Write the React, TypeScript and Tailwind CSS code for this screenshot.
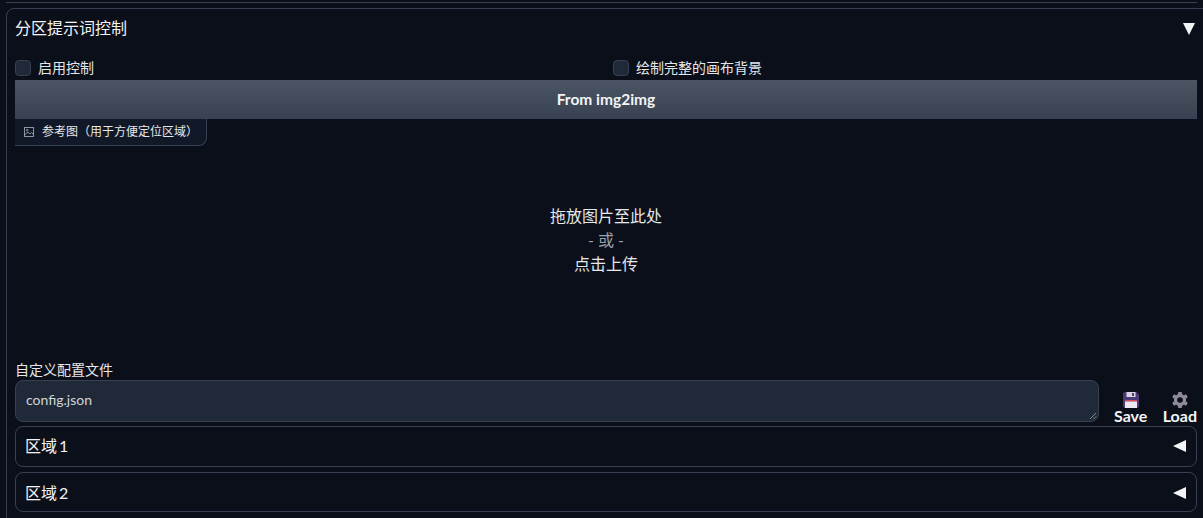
const FONT = 'font-["Lato","Noto_Sans_CJK_SC",sans-serif]'

function SaveIcon() {
  return (
    <svg width="16" height="16" viewBox="0 0 16 16">
      <path d="M0 2 A2 2 0 0 1 2 0 H13.5 L16 2.5 V14 A2 2 0 0 1 14 16 H2 A2 2 0 0 1 0 14 Z" fill="#4b3a78" />
      <rect x="3.5" y="0" width="9" height="5" fill="#d9d6e2" />
      <rect x="9" y="1" width="2" height="3" fill="#4b3a78" />
      <rect x="2" y="8" width="12" height="1.5" fill="#e0484f" />
      <rect x="2" y="9.5" width="12" height="6.5" fill="#ece9f0" />
    </svg>
  )
}

function GearIcon() {
  return (
    <svg width="16" height="16" viewBox="0 0 16 16">
      <path
        fill="#8f8898"
        fillRule="evenodd"
        d="M6.3 0 H9.7 L10.2 2.3 L11.9 3.2 L14 2.2 L15.8 5 L14 6.5 V9.5 L15.8 11 L14 13.8 L11.9 12.8 L10.2 13.7 L9.7 16 H6.3 L5.8 13.7 L4.1 12.8 L2 13.8 L0.2 11 L2 9.5 V6.5 L0.2 5 L2 2.2 L4.1 3.2 L5.8 2.3 Z M8 5.2 A2.8 2.8 0 1 0 8 10.8 A2.8 2.8 0 1 0 8 5.2 Z"
      />
    </svg>
  )
}

function ImageIcon() {
  return (
    <svg width="10" height="10" viewBox="0 0 10 10" fill="none" stroke="#9ca3af" strokeWidth="0.9">
      <rect x="0.5" y="0.5" width="9" height="9" />
      <circle cx="3.2" cy="3.2" r="0.8" />
      <path d="M0.5 8 L4 5 L6 7 L7.5 5.5 L9.5 7.5" />
    </svg>
  )
}

function Checkbox({ label, className }: { label: string; className: string }) {
  return (
    <label className={`flex items-center gap-[7px] ${className}`}>
      <span className="w-4 h-4 rounded-[4px] border border-[#374151] bg-[#1f2937]" />
      <span className="text-sm leading-4 text-[#e5e7eb]">{label}</span>
    </label>
  )
}

function Region({ title }: { title: string }) {
  return (
    <div className="h-[41px] last:h-[40px] last:pt-[3px] rounded-lg border border-[#374151] flex items-center justify-between pl-[9px] pr-[10px]">
      <span className="text-base text-[#f3f4f6] -mt-[2px] [word-spacing:-2px]">{title}</span>
      <span className="w-0 h-0 border-y-[6px] border-y-transparent border-r-[13px] border-r-[#f3f4f6] -mt-[2px]" />
    </div>
  )
}

export default function App() {
  return (
    <div className={`h-[518px] overflow-hidden bg-[#0b0f19] ${FONT}`}>
      <div className="h-[3px] mx-[6px] border-b border-[#374151]" />
      <div className="mt-[5px] ml-[6px] w-[1210px] h-[520px] rounded-lg border border-[#374151] px-2">
        <div className="h-[38px] flex items-center justify-between pr-[10px]">
          <span className="text-base text-[#f3f4f6]">分区提示词控制</span>
          <span className="w-0 h-0 border-x-[6px] border-x-transparent border-t-[12px] border-t-[#f3f4f6] mr-[2px] mt-[2px]" />
        </div>
        <div className="mt-[12px] w-[1182px] flex items-center h-[18px]">
          <Checkbox label="启用控制" className="w-[598px]" />
          <Checkbox label="绘制完整的画布背景" className="" />
        </div>
        <button className="mt-[3px] w-[1182px] h-[39px] block bg-gradient-to-b from-[#4b5563] to-[#374151] text-[15.5px] font-bold text-[#f3f4f6]">
          From img2img
        </button>
        <div className="w-[192px] h-[27px] flex items-center gap-[8px] pl-[9px] bg-[#111827] rounded-br-lg border-r border-b border-[#374151]">
          <ImageIcon />
          <span className="text-xs text-[#e5e7eb]">参考图（用于方便定位区域）</span>
        </div>
        <div className="w-[1182px] h-[214px] flex flex-col items-center justify-center text-base leading-6 text-[#e5e7eb] pb-[26px]">
          <span>拖放图片至此处</span>
          <span className="text-[#9ca3af]">- 或 -</span>
          <span>点击上传</span>
        </div>
        <div className="w-[1182px]">
          <div className="text-sm leading-5 text-[#e5e7eb]">自定义配置文件</div>
          <div className="flex items-end">
            <div className="relative w-[1084px] h-[42px] rounded-lg border border-[#374151] bg-[#1f2937] pl-[10px] pb-[3px] flex items-center text-sm text-[#d1d5db]">
              config.json
              <svg className="absolute right-px bottom-px" width="8" height="8" viewBox="0 0 8 8" stroke="#9ca3af" strokeWidth="0.8">
                <path d="M1 7 L7 1 M4.5 7 L7 4.5" />
              </svg>
            </div>
            <div className="flex-1 flex justify-between pl-[15px] text-base font-bold leading-4 text-[#f3f4f6] -mb-[2px]">
              <div className="flex flex-col items-center">
                <SaveIcon />
                <span>Save</span>
              </div>
              <div className="flex flex-col items-center">
                <GearIcon />
                <span>Load</span>
              </div>
            </div>
          </div>
          <div className="mt-[4px] flex flex-col gap-[5px]">
            <Region title="区域 1" />
            <Region title="区域 2" />
          </div>
        </div>
      </div>
    </div>
  )
}
